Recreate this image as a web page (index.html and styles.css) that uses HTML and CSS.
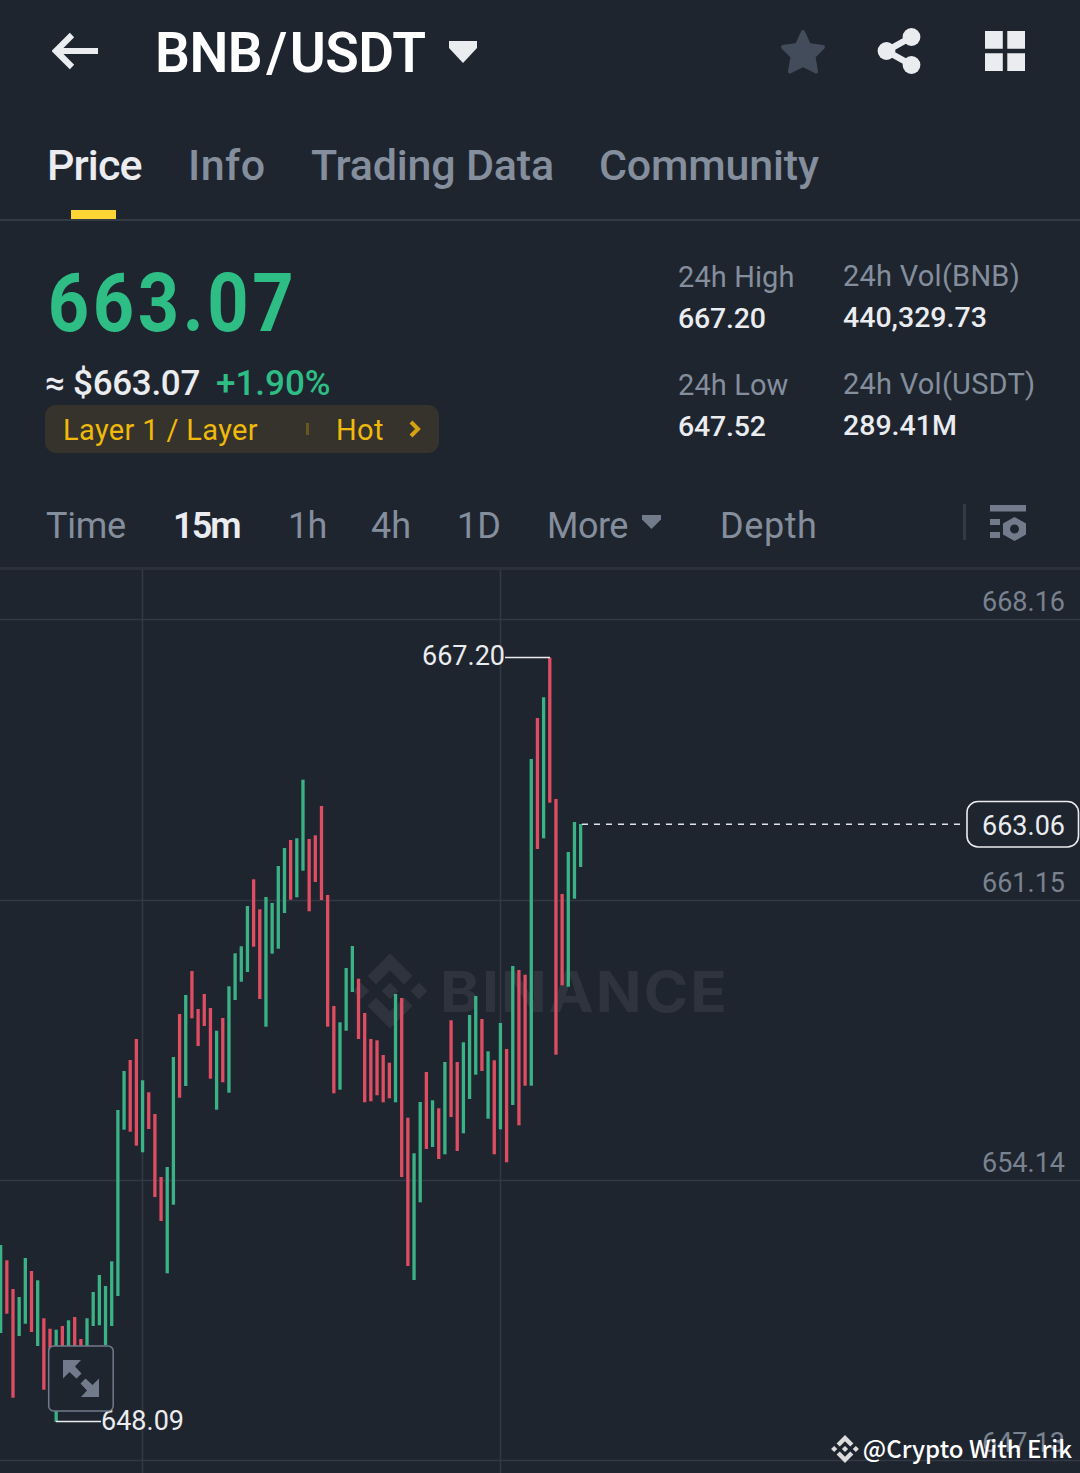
FILE: index.html
```html
<!DOCTYPE html>
<html lang="en">
<head>
<meta charset="utf-8">
<title>BNB/USDT</title>
<link rel="stylesheet" href="styles.css">
</head>
<body>
<header class="topbar">
  <svg class="back" width="46" height="38" viewBox="0 0 46 38"><path d="M46 19H5M20 3L4 19l16 16" fill="none" stroke="#eaecef" stroke-width="6.2"/></svg>
  <h1 class="pair">BNB<span class="slash">/</span>USDT</h1>
  <svg class="pair-caret" width="28" height="22" viewBox="0 0 28 22"><path d="M0 0H28V7L14 22L0 7Z" fill="#eaecef"/></svg>
  <div class="actions">
    <svg width="46" height="48" viewBox="0 0 46 48"><path d="M23 5L29 18L43 20L33.500 29.500L36 44.500L23 38L10 44.500L12.500 29.500L3 20L17 18Z" fill="#434c5a" stroke="#434c5a" stroke-width="4" stroke-linejoin="round"/></svg>
    <svg width="44" height="46" viewBox="0 0 44 46"><path d="M34.500 9L9.500 23L34.500 37" fill="none" stroke="#eaecef" stroke-width="6.500"/><g fill="#eaecef"><circle cx="34.500" cy="9" r="8.900"/><circle cx="9.500" cy="23" r="8.900"/><circle cx="34.500" cy="37" r="8.900"/></g></svg>
    <svg width="40" height="40" viewBox="0 0 40 40"><path d="M0 0h17.800v17.800H0zM22.300 0H40v17.800H22.300zM0 22.300h17.800V40H0zM22.300 22.300H40V40H22.300z" fill="#eaecef"/></svg>
  </div>
</header>
<nav class="tabs">
  <a class="tab tab-price active">Price</a>
  <a class="tab tab-info">Info</a>
  <a class="tab tab-data">Trading Data</a>
  <a class="tab tab-comm">Community</a>
</nav>
<section class="quote">
  <div class="quote-main">
    <div class="last">663.07</div>
    <div class="fiat"><span class="usd">≈ $663.07</span><span class="change">+1.90%</span></div>
    <div class="tags"><span class="tag-layer">Layer 1 / Layer</span><i class="tag-sep"></i><span class="tag-hot">Hot</span>
      <svg width="12" height="18" viewBox="0 0 12 18"><path d="M2 2l7 7-7 7" fill="none" stroke="#d5a212" stroke-width="4"/></svg></div>
  </div>
  <dl class="stats stats-range">
    <dt>24h High</dt><dd>667.20</dd>
    <dt>24h Low</dt><dd>647.52</dd>
  </dl>
  <dl class="stats stats-vol">
    <dt>24h Vol(BNB)</dt><dd>440,329.73</dd>
    <dt>24h Vol(USDT)</dt><dd>289.41M</dd>
  </dl>
</section>
<nav class="intervals">
  <span class="iv-time">Time</span>
  <span class="iv-15m">15m</span>
  <span class="iv-1h">1h</span>
  <span class="iv-4h">4h</span>
  <span class="iv-1d">1D</span>
  <span class="iv-more">More</span>
  <svg class="more-caret" width="19" height="14" viewBox="0 0 19 14"><path d="M0 0H19V4.500L9.500 14L0 4.500Z" fill="#727b8c"/></svg>
  <span class="iv-depth">Depth</span>
  <i class="iv-sep"></i>
  <svg class="settings" width="36" height="36" viewBox="0 0 36 36"><g fill="#727b8c"><path d="M0 0h36v6.500H0zM0 14h10v6H0zM0 27h10v6H0z"/><path fill-rule="evenodd" d="M24.500 12L36 18.500V29.500L24.500 36L13 29.500V18.500ZM24.500 19.500a4.500 4.500 0 1 0 0 9a4.500 4.500 0 1 0 0-9Z"/></g></svg>
</nav>
<main class="chart">
  <svg class="plot" width="1080" height="903" viewBox="0 570 1080 903">
    <path d="M0 619.500H1080M0 900.500H1080M0 1180.500H1080M0 1460.500H1080M142.500 570V1473M500.500 570V1473" stroke="#323844" stroke-width="1.600" fill="none"/>
    <g fill="#2f333e">
      <path transform="translate(390 991)" d="M0-37.500L22.500-15L14-6.500L0-20.500L-14-6.500L-22.500-15ZM0 37.500L22.500 15L14 6.500L0 20.500L-14 6.500L-22.500 15ZM0-8.300L8.300 0L0 8.300L-8.300 0ZM29-8.300L37.300 0L29 8.300L20.700 0ZM-29-8.300L-20.700 0L-29 8.300L-37.300 0Z"/>
      <text class="wordmark" x="440" y="1011.500" textLength="289" lengthAdjust="spacingAndGlyphs">BINANCE</text>
    </g>
    <g id="candles"></g>
    <path d="M505 657.500H550M56 1421.500H101" stroke="#eaecef" stroke-width="1.600"/>
    <path d="M582 824.300H962" stroke="#dfe2e7" stroke-width="1.600" stroke-dasharray="6 6"/>
    <rect x="967" y="801.500" width="111.500" height="45.500" rx="11" fill="#1f252f" stroke="#eaecef" stroke-width="1.600"/>
    <g class="axis">
      <text x="982" y="611" textLength="83">668.16</text>
      <text x="982" y="892" textLength="83">661.15</text>
      <text x="982" y="1172" textLength="83">654.14</text>
      <text x="982" y="1452" textLength="83">647.13</text>
    </g>
    <g class="marks">
      <text x="982" y="835" textLength="83">663.06</text>
      <text x="422" y="665" textLength="83">667.20</text>
      <text x="101" y="1430" textLength="83">648.09</text>
    </g>
    <g>
      <rect x="48.700" y="1346" width="64.500" height="65" rx="5" fill="#1f252f" stroke="#727b8c" stroke-width="1.500"/>
      <path d="M63 1360H81L75 1366.500L81.500 1373.500L76.500 1378.500L69.500 1372L63 1378.500ZM99 1397H81L87 1390.500L80.500 1383.500L85.500 1378.500L92.500 1385L99 1378.500Z" fill="#727b8c"/>
    </g>
  </svg>
  <div class="credit">
    <svg width="28" height="28" viewBox="-37.500 -37.500 75 75"><path fill="#dcdcdc" d="M0-37.500L22.500-15L14-6.500L0-20.500L-14-6.500L-22.500-15ZM0 37.500L22.500 15L14 6.500L0 20.500L-14 6.500L-22.500 15ZM0-8.300L8.300 0L0 8.300L-8.300 0ZM29-8.300L37.300 0L29 8.300L20.700 0ZM-29-8.300L-20.700 0L-29 8.300L-37.300 0Z"/></svg>
    <span>@Crypto With Erik</span>
  </div>
</main>
<script src="chart.js"></script>
</body>
</html>
```
FILE: styles.css
```css
* { box-sizing: border-box; }
body {
  margin: 0;
  width: 1080px;
  height: 1473px;
  overflow: hidden;
  background: #1f252f;
  color: #eaecef;
  font-family: Roboto, "Liberation Sans", sans-serif;
  white-space: nowrap;
}
svg { display: block; flex: none; }

.topbar { display: flex; align-items: center; height: 102px; padding: 0 55px 0 52px; }
.pair { margin: 4px 0 0 57px; width: 271px; font-size: 55px; font-weight: 600; line-height: 64px; letter-spacing: -0.5px; color: #fff; }
.slash { margin: 0 3px 0 4px; }
.pair-caret { margin: 1px 0 0 23px; }
.actions { display: flex; align-items: center; margin-left: auto; }
.actions svg + svg { margin-left: 51px; }
.actions svg + svg + svg { margin-left: 64px; }

.tabs { display: flex; height: 119px; padding: 36px 0 0 47px; border-bottom: 2px solid #333a46; font-size: 43px; font-weight: 500; line-height: 54px; letter-spacing: -0.2px; color: #848e9c; }
.tab { height: 80px; }
.tab-price { width: 94px; margin-right: 47px; letter-spacing: -0.9px; }
.tab-info { width: 77px; margin-right: 46px; letter-spacing: 0.5px; }
.tab-data { width: 242px; margin-right: 46px; }
.tab.active { color: #eaecef; }
.tab.active::after { content: ""; display: block; width: 45px; height: 9px; margin: 18px 0 0 24px; background: #fcd535; }

.quote { display: flex; height: 256px; padding-top: 35px; }
.quote-main { width: 633px; padding-left: 45px; }
.last { height: 94px; padding-left: 3px; font-size: 82px; line-height: 94px; font-weight: 700; letter-spacing: 4.1px; color: #2ebd85; transform: scaleX(0.88); transform-origin: 0 0; }
.fiat { display: flex; height: 55px; padding-top: 13px; font-size: 35px; font-weight: 500; line-height: 42px; }
.usd { width: 171px; letter-spacing: -0.3px; }
.change { color: #2ebd85; }
.tags { display: flex; align-items: center; width: 394px; height: 48px; padding-left: 18px; border-radius: 11px; background: #35332b; color: #f0b90b; font-size: 29px; line-height: 46px; }
.tags span { padding-top: 2px; }
.tag-layer { width: 243px; letter-spacing: 0.35px; }
.tag-sep { width: 3px; height: 12px; background: #675620; }
.tag-hot { width: 73px; margin-left: 27px; letter-spacing: 0.4px; }
.stats { margin: 0; width: 166px; padding-left: 45px; font-size: 29px; line-height: 42px; }
.stats-vol { width: 236px; margin-top: -1px; padding-left: 44px; }
.stats dt { color: #848e9c; letter-spacing: 0.1px; }
.stats-vol dt { letter-spacing: 0.25px; }
.stats dd { margin: 0 0 24px; font-size: 28.5px; font-weight: 500; letter-spacing: -0.2px; }
.stats-vol dd { letter-spacing: 0; }

.intervals { display: flex; height: 93px; padding: 27px 0 0 46px; border-bottom: 3px solid #2b303c; font-size: 36px; line-height: 44px; color: #848e9c; }
.iv-time { width: 127px; letter-spacing: -0.3px; }
.iv-15m { width: 115px; color: #eaecef; font-weight: 600; letter-spacing: -1.9px; }
.iv-1h { width: 83px; letter-spacing: -0.8px; }
.iv-4h { width: 86px; }
.iv-1d { width: 90px; }
.iv-more { width: 94px; letter-spacing: -0.5px; }
.more-caret { margin: 11px 0 0 1px; }
.iv-depth { width: 243px; margin-left: 59px; letter-spacing: 0.6px; }
.iv-sep { width: 3px; height: 36px; background: #333a46; }
.settings { margin: 1px 0 0 24px; }

.chart { position: relative; height: 903px; }
.plot text { font-family: Roboto, sans-serif; font-size: 27px; }
.plot .wordmark { font-family: Inter, sans-serif; font-weight: 700; font-size: 57px; letter-spacing: 2px; }
.axis { fill: #79828f; }
.marks { fill: #eaecef; }
.up { fill: #3bb285; }
.down { fill: #df4d62; }
.credit { position: absolute; right: 8px; bottom: 6px; display: flex; align-items: center; gap: 4px; height: 36px; color: #fff; font: 500 24px/36px "Noto Sans CJK SC", sans-serif; }
.credit span { margin-top: -3px; }
```
FILE: chart.js
```js
// One entry per bar: direction, high y, low y (chart pixels).
const bars = `g1245-1333 r1260.3-1313.7 r1289-1397.7 g1297-1336 g1258-1323.7 r1271-1332 g1280.3-1346 r1318.3-1389.7
r1328.7-1360 g1329.7-1422 r1326-1360 g1320.3-1360 r1317-1360 r1339-1360 g1318.3-1360 g1292-1326 g1275-1325.3 g1286-1345
g1261.3-1326 g1110-1296 g1071-1129.7 r1060-1131.7 r1039-1145.7 g1080.3-1152.3 r1092.3-1129 r1114-1197 r1177-1221 g1167-1273.3
g1057-1204.7 r1014-1097.7 g995-1086 r971-1018.3 r1009-1046 r994-1026 r1008-1078.7 g1030.7-1109.7 r1018-1082.3 g986.3-1092.7
g953.3-1000 g946.3-981.7 g906-972 r879.3-946.7 r909.3-999 g897-1026.7 g903-953.7 g866-948.7 g848-913 r840-899.7 g838.3-897.3
g779.7-870.7 r839-911.3 r835.3-882 r806-900 r895-1026.7 r1006-1093.3 g1022.3-1089.7 g968-1030.7 g946-992 r978.7-1039
r1013-1102.3 r1039-1101.3 r1040.3-1095.3 r1055-1102.3 r1062.7-1098.3 g994-1102.3 r998-1177 r1117.7-1266 g1153.3-1280
g1102-1202.3 r1072-1149 g1100.3-1147 r1108.3-1159 g1062-1154.3 r1020.3-1117 r1062-1151 g1042.3-1133.3 g1015-1099 g996-1074.7
r1019-1071 g1051.3-1118.7 r1060.3-1154.3 g1023-1129.3 r1049-1162.3 g966-1105 r970-1125.3 r974.7-1085.7 g759-1085.7
r718-849 g697.3-838.3 r657.7-802.7 r799-1054.7 r894-985.3 g852-986.7 g822-898.7 g824-867`.split(/\s+/);

const layer = document.getElementById("candles");
bars.forEach((bar, i) => {
  const [top, bottom] = bar.slice(1).split("-").map(Number);
  const rect = document.createElementNS("http://www.w3.org/2000/svg", "rect");
  rect.setAttribute("class", bar[0] === "g" ? "up" : "down");
  rect.setAttribute("x", (0.6 + 6.17 * i - 1.6).toFixed(2));
  rect.setAttribute("y", top);
  rect.setAttribute("width", 3.3);
  rect.setAttribute("height", bottom - top);
  layer.appendChild(rect);
});
```
